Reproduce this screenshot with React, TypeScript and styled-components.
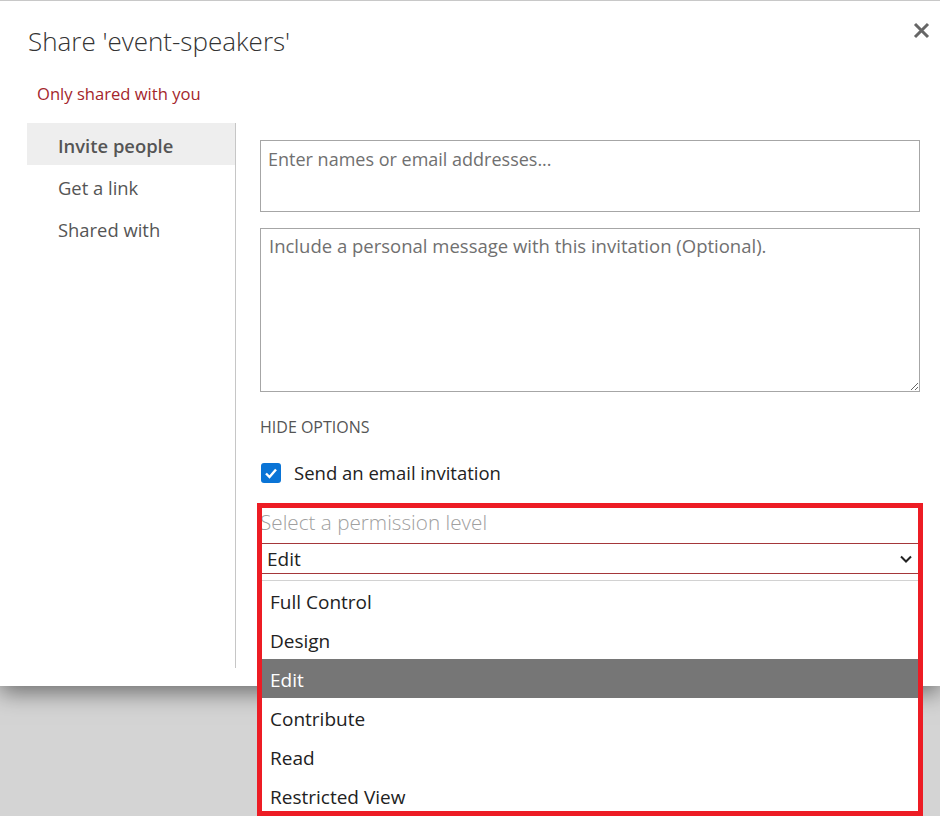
import React from 'react';
import styled, { createGlobalStyle } from 'styled-components';

const GlobalStyle = createGlobalStyle`
    html, body {
        margin: 0;
        padding: 0;
        background: #d4d4d4;
    }
    body {
        font-family: 'Open Sans', 'Noto Sans', sans-serif;
        color: #222;
    }
    #root {
        min-height: 100vh;
    }
`;

const Dialog = styled.div`
    position: relative;
    box-sizing: border-box;
    height: 686px;
    display: flex;
    flex-direction: column;
    padding: 0 20px 18px 27px;
    background: #fff;
    border-top: 1px solid #c8c8c8;
    box-shadow: 0 6px 22px rgba(0, 0, 0, 0.5);
`;

const Title = styled.h1`
    margin: 20px 0 0 1px;
    font-size: 26px;
    line-height: 40px;
    font-weight: 300;
    color: #333;
`;

const CloseButton = styled.button`
    position: absolute;
    top: 21px;
    right: 10px;
    width: 17px;
    height: 17px;
    padding: 0;
    border: none;
    background: none;
    display: flex;
`;

const Status = styled.div`
    margin: 22px 0 0 10px;
    font-size: 16.6px;
    line-height: 22px;
    color: #a4262c;
`;

const Body = styled.div`
    flex: 1;
    min-height: 0;
    margin-top: 18px;
    display: grid;
    grid-template-columns: 209px 1fr;
    grid-template-rows: minmax(0, 1fr);
`;

const Nav = styled.nav`
    border-right: 1px solid #c6c6c6;
`;

const NavItem = styled.div<{ active?: boolean }>`
    height: 40px;
    padding: 2px 0 0 31px;
    line-height: 42px;
    overflow: hidden;
    font-size: 18.4px;
    font-weight: ${({ active }) => (active ? 600 : 400)};
    color: #555;
    background: ${({ active }) => (active ? '#eeeeee' : 'transparent')};
`;

const Content = styled.div`
    position: relative;
    z-index: 1;
    padding: 17px 0 0 24px;
`;

const PeoplePicker = styled.div`
    box-sizing: border-box;
    height: 72px;
    padding: 6px 7px;
    border: 1px solid #a6a6a6;
    font-size: 18px;
    line-height: 24px;
    color: #707070;
`;

const Message = styled.textarea`
    display: block;
    box-sizing: border-box;
    width: 100%;
    height: 164px;
    margin: 16px 0 0;
    padding: 5px 8px;
    border: 1px solid #a6a6a6;
    border-radius: 0;
    font-family: 'Open Sans', 'Noto Sans', sans-serif;
    font-size: 18.5px;
    line-height: 24px;
    color: #222;
    outline: none;
    &::placeholder {
        color: #707070;
    }
`;

const OptionsToggle = styled.div`
    margin-top: 25px;
    font-size: 16px;
    line-height: 20px;
    color: #555;
    text-transform: uppercase;
`;

const CheckRow = styled.label`
    margin-top: 24px;
    display: flex;
    align-items: center;
    gap: 13px;
    font-size: 18.5px;
    line-height: 24px;
    color: #222;
`;

const CheckBox = styled.span`
    width: 20px;
    height: 20px;
    margin-left: 1px;
    border-radius: 3px;
    background: #0a74d6;
    display: flex;
    align-items: center;
    justify-content: center;
`;

const Permission = styled.div`
    position: relative;
    margin-top: 23px;

    &::after {
        content: '';
        position: absolute;
        top: -5px;
        left: -3px;
        right: -3px;
        bottom: -1px;
        border: 5px solid #ed1c24;
        pointer-events: none;
    }
`;

const PermissionLabel = styled.div`
    height: 35px;
    font-size: 20.7px;
    line-height: 28px;
    font-weight: 300;
    color: #a0a0a0;
`;

const Select = styled.div`
    box-sizing: border-box;
    height: 31px;
    display: flex;
    align-items: center;
    justify-content: space-between;
    padding: 0 8px 0 7px;
    border-top: 1px solid #a4373a;
    border-bottom: 1px solid #a4373a;
    font-size: 19px;
    color: #222;
`;

const OptionList = styled.ul`
    list-style: none;
    margin: 6px 0 0;
    padding: 0;
    border-top: 1px solid #d2d2d2;
    background: #fff;
`;

const Option = styled.li<{ selected?: boolean }>`
    height: 37px;
    padding: 2px 0 0 10px;
    line-height: 39px;
    overflow: hidden;
    font-size: 19px;
    color: ${({ selected }) => (selected ? '#fff' : '#222')};
    background: ${({ selected }) => (selected ? '#767676' : 'transparent')};
`;

const levels = ['Full Control', 'Design', 'Edit', 'Contribute', 'Read', 'Restricted View'];

const App: React.FC = () => {
    return (
        <>
            <GlobalStyle />
            <Dialog>
                <Title>Share 'event-speakers'</Title>
                <CloseButton aria-label="Close">
                    <svg width="17" height="17" viewBox="0 0 17 17">
                        <path d="M2 2 L15 15 M15 2 L2 15" stroke="#666" strokeWidth="3" />
                    </svg>
                </CloseButton>
                <Status>Only shared with you</Status>
                <Body>
                    <Nav>
                        <NavItem active>Invite people</NavItem>
                        <NavItem>Get a link</NavItem>
                        <NavItem>Shared with</NavItem>
                    </Nav>
                    <Content>
                        <PeoplePicker>Enter names or email addresses...</PeoplePicker>
                        <Message placeholder="Include a personal message with this invitation (Optional)." />
                        <OptionsToggle>Hide options</OptionsToggle>
                        <CheckRow>
                            <CheckBox>
                                <svg width="14" height="14" viewBox="0 0 14 14">
                                    <path d="M2 7.5 L5.5 11 L12 3.5" stroke="#fff" strokeWidth="2.4" fill="none" />
                                </svg>
                            </CheckBox>
                            Send an email invitation
                        </CheckRow>
                        <Permission>
                            <PermissionLabel>Select a permission level</PermissionLabel>
                            <Select>
                                <span>Edit</span>
                                <svg width="12" height="8" viewBox="0 0 12 8">
                                    <path d="M1 1.5 L6 6.5 L11 1.5" stroke="#222" strokeWidth="2" fill="none" />
                                </svg>
                            </Select>
                            <OptionList>
                                {levels.map(level => (
                                    <Option key={level} selected={level === 'Edit'}>
                                        {level}
                                    </Option>
                                ))}
                            </OptionList>
                        </Permission>
                    </Content>
                </Body>
            </Dialog>
        </>
    );
};

export default App;
